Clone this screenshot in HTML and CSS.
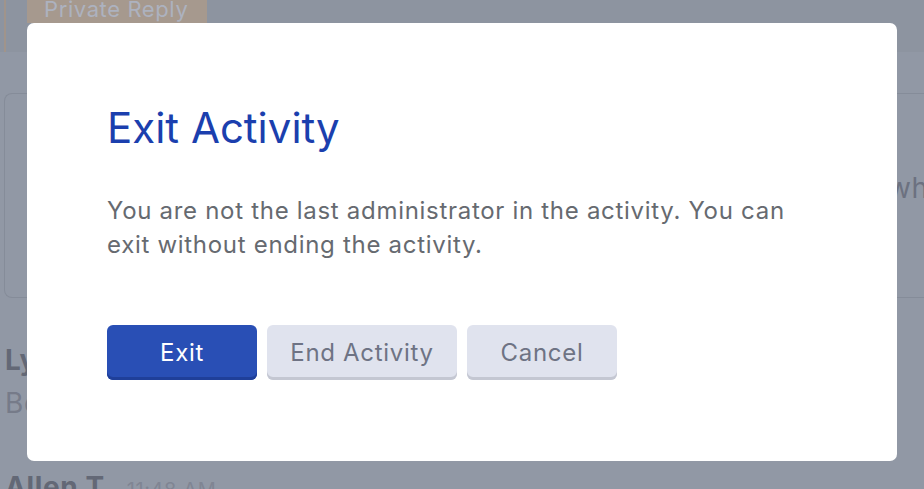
FILE: index.html
```html
<!DOCTYPE html>
<html lang="en">
<head>
<meta charset="utf-8">
<title>Exit Activity</title>
<link rel="stylesheet" href="styles.css">
</head>
<body>
<div class="page">
  <div class="top-strip">
    <div class="quote-bar"></div>
    <div class="private-tag">Private Reply</div>
  </div>
  <div class="panel">
    <div class="panel-text">wh</div>
  </div>
  <div class="msg">
    <div class="msg-name">Ly</div>
    <div class="msg-body">Be</div>
  </div>
  <div class="msg msg-second">
    <span class="msg-name">Allen T</span><span class="msg-time">11:48 AM</span>
  </div>
</div>

<div class="modal" role="dialog" aria-labelledby="modal-title">
  <h1 class="modal-title" id="modal-title">Exit Activity</h1>
  <p class="modal-text">You are not the last administrator in the activity. You can exit without ending the activity.</p>
  <div class="modal-actions">
    <button class="btn btn-primary">Exit</button>
    <button class="btn btn-secondary btn-wide">End Activity</button>
    <button class="btn btn-secondary">Cancel</button>
  </div>
</div>
</body>
</html>
```
FILE: styles.css
```css
html, body {
  margin: 0;
  padding: 0;
}
body {
  width: 924px;
  height: 489px;
  overflow: hidden;
  background: #9198a5;
  font-family: Inter, "Noto Sans", "Liberation Sans", sans-serif;
  position: relative;
}
.page {
  display: flex;
  flex-direction: column;
  height: 489px;
}
.page > * {
  flex-shrink: 0;
}
.top-strip {
  height: 52px;
  background: #8d94a0;
  display: flex;
  align-items: flex-start;
  gap: 21px;
  padding-left: 4px;
}
.quote-bar {
  width: 2px;
  height: 52px;
  background: #a0948b;
}
.private-tag {
  width: 180px;
  height: 28px;
  background: #a6998e;
  color: #adb2bf;
  font-size: 22px;
  letter-spacing: 0.6px;
  line-height: 28px;
  margin-top: -5px;
  padding-left: 17px;
  box-sizing: border-box;
  white-space: nowrap;
}
.panel {
  margin: 41px 0 0 4px;
  height: 205px;
  border: 1.5px solid #858c99;
  border-right: none;
  border-radius: 8px 0 0 8px;
  box-sizing: border-box;
  display: flex;
  align-items: center;
  justify-content: flex-end;
}
.panel-text {
  color: #6c7180;
  font-size: 28px;
  letter-spacing: 0.5px;
  width: 36px;
  white-space: nowrap;
  margin-bottom: 16px;
}
.msg {
  padding-left: 5px;
  margin-top: 45px;
  color: #636876;
  letter-spacing: 0.6px;
}
.msg-name {
  font-size: 28px;
  font-weight: 700;
  line-height: 34px;
}
.msg-body {
  font-size: 28px;
  line-height: 34px;
  margin-top: 9px;
  color: #767b89;
}
.msg-second {
  margin-top: 50px;
  display: flex;
  align-items: baseline;
  gap: 22px;
}
.msg-time {
  font-size: 20px;
  color: #808593;
}

.modal {
  position: absolute;
  left: 27px;
  top: 23px;
  width: 870px;
  height: 438px;
  box-sizing: border-box;
  background: #ffffff;
  border-radius: 7px;
  padding: 80px 80px 0 80px;
}
.modal-title {
  margin: 0;
  font-size: 42px;
  font-weight: 400;
  line-height: 50px;
  color: #1b3fae;
}
.modal-text {
  margin: 41px 0 0 0;
  font-size: 24px;
  letter-spacing: 0.7px;
  line-height: 34px;
  color: #666a70;
  max-width: 700px;
}
.modal-actions {
  display: flex;
  gap: 10px;
  margin-top: 63px;
}
.btn {
  height: 55px;
  width: 150px;
  border: none;
  border-radius: 6px;
  font-family: inherit;
  font-size: 24px;
  letter-spacing: 0.7px;
  padding: 0;
  cursor: pointer;
}
.btn-wide {
  width: 190px;
}
.btn-primary {
  background: #294fb5;
  color: #ffffff;
  box-shadow: inset 0 -3px 0 #1f3f99;
}
.btn-secondary {
  background: #e0e3ee;
  color: #6e7384;
  box-shadow: inset 0 -3px 0 #c4c7d2;
}
```
